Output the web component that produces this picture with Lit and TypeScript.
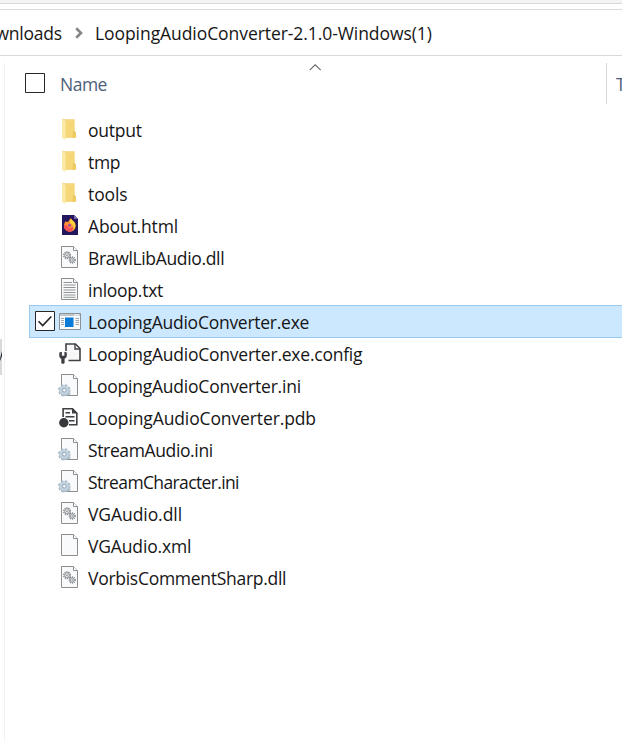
import { LitElement, html, svg, css, type TemplateResult } from "lit";
import { customElement, property } from "lit/decorators.js";

type Kind = "folder" | "firefox" | "dll" | "text" | "app" | "config" | "ini" | "pdb" | "blank";

interface Entry {
  name: string;
  kind: Kind;
  spacing: number;
  selected?: boolean;
}

const ENTRIES: Entry[] = [
  { name: "output", kind: "folder", spacing: -0.25 },
  { name: "tmp", kind: "folder", spacing: -0.3 },
  { name: "tools", kind: "folder", spacing: -0.1 },
  { name: "About.html", kind: "firefox", spacing: -0.15 },
  { name: "BrawlLibAudio.dll", kind: "dll", spacing: -0.34 },
  { name: "inloop.txt", kind: "text", spacing: -0.25 },
  { name: "LoopingAudioConverter.exe", kind: "app", spacing: -0.26, selected: true },
  { name: "LoopingAudioConverter.exe.config", kind: "config", spacing: -0.23 },
  { name: "LoopingAudioConverter.ini", kind: "ini", spacing: -0.22 },
  { name: "LoopingAudioConverter.pdb", kind: "pdb", spacing: -0.12 },
  { name: "StreamAudio.ini", kind: "ini", spacing: -0.37 },
  { name: "StreamCharacter.ini", kind: "ini", spacing: -0.63 },
  { name: "VGAudio.dll", kind: "dll", spacing: -0.07 },
  { name: "VGAudio.xml", kind: "blank", spacing: -0.15 },
  { name: "VorbisCommentSharp.dll", kind: "dll", spacing: -0.28 },
];

const page = svg`
  <path d="M3.5 .5H15.5L19.5 4.5V21.5H3.5Z" fill="#f9fafb" stroke="#8b8d8f"/>
  <path d="M15.5 .5V4.5H19.5" fill="#fff" stroke="#8b8d8f"/>`;

const ICONS: Record<Kind, TemplateResult> = {
  folder: svg`
    <path d="M4 1H16.5V13L17.8 14.5V20H4Z" fill="#f3dc93"/>
    <path d="M7.5 2.5H16.5V13L17.8 14.5V19.5H7.5Z" fill="#f6d778"/>
    <path d="M4 1.5L7.5 3V22L4 19.5Z" fill="#fce9a6"/>
    <path d="M15 13.5L16.5 13L17.8 14.5V19.5H14.5Z" fill="#edc85d"/>`,
  firefox: svg`
    <path d="M4 1H16L20 5V21H4Z" fill="#24165c"/>
    <path d="M16 1V5H20Z" fill="#7566ae"/>
    <path d="M7.2 7.3C8.4 8.3 9.5 7.8 10.4 7.8C10.8 6.3 12 5 13 4.3C13 6 16.6 7.2 17.2 9.2C18.7 13.8 16 17.7 12.1 17.7C8.2 17.7 5.3 14.4 6 10.8Z" fill="#ff912e"/>
    <path d="M6 10.8C7.2 12 9 11 10 12.8C11 15 15 14 15.4 11.2C16.5 15 13.8 17.7 11.8 17.7C8.3 17.7 5.5 14.8 6 10.8Z" fill="#f4505a"/>
    <path d="M13 4.3C13 6.7 17.5 7 17.4 12C17.2 13.6 16 15 14.7 15.7C16 12.5 14.5 10.5 12.5 9.3C11.5 8.6 12 6 13 4.3Z" fill="#ffd43b"/>
    <circle cx="11.5" cy="11.2" r="1.5" fill="#a04ba8"/>`,
  dll: svg`${page}
    <circle cx="9" cy="9.2" r="3.2" fill="#eef0f1" stroke="#818589" stroke-width="1.6" stroke-dasharray="1.2 .8"/>
    <circle cx="9" cy="9.2" r="2.3" fill="#e7eaec" stroke="#8c9195" stroke-width=".8"/>
    <circle cx="9" cy="9.2" r=".8" fill="#777b7e"/>
    <circle cx="14.2" cy="14" r="2.9" fill="#eef0f1" stroke="#818589" stroke-width="1.5" stroke-dasharray="1.1 .75"/>
    <circle cx="14.2" cy="14" r="2" fill="#e7eaec" stroke="#8c9195" stroke-width=".8"/>
    <circle cx="14.2" cy="14" r=".7" fill="#777b7e"/>`,
  text: svg`${page}
    <path d="M5.5 4.5H14M5.5 7H17.5M5.5 9.5H17.5M5.5 12H17.5M5.5 14.5H17.5M5.5 17H17.5M5.5 19.3H17.5" stroke="#909497" fill="none"/>`,
  app: svg`
    <path d="M1.5 3.5H22.5V19.5H1.5Z" fill="#f8f9fa" stroke="#8b9399"/>
    <path d="M2 4H22V6H2Z" fill="#c2c7cb"/>
    <path d="M16 5H21" stroke="#fff"/>
    <path d="M7 7.5H15.5V17H7Z" fill="#087bd8"/>
    <path d="M3 8.5H6M3 10.5H6M3 12.5H6M3 14.5H6M17.5 8.5H21M17.5 10.5H21M17.5 12.5H21M17.5 14.5H21" stroke="#9aa5ae" fill="none"/>`,
  config: svg`
    <path d="M8 9V2H17.5L22 6.5V18.5H10.5" fill="#f7f7f7" stroke="#414347" stroke-width="1.6"/>
    <path d="M17 2V7H22" fill="none" stroke="#414347" stroke-width="1.4"/>
    <path d="M1.3 10.5V14.2C1.3 15.4 2.4 16.4 3.3 16.7V20.8C3.3 22.2 6.6 22.2 6.6 20.8V16.7C8 16 8.8 15 8.8 13.8V10.5L6.4 9.8V13.7H3.9V9.8Z" fill="#3d3f43"/>`,
  ini: svg`${page}
    <circle cx="6.3" cy="16.3" r="5.2" fill="#c6d3dc" stroke="#abbdc9" stroke-width="2" stroke-dasharray="2.4 1.68"/>
    <circle cx="6.3" cy="16.3" r="4.3" fill="#c3d3de"/>
    <circle cx="6.3" cy="16.3" r="1.8" fill="#f9fafb" stroke="#8fa5b5"/>
    <circle cx="11" cy="19.8" r="1.4" fill="#aebfca"/>`,
  pdb: svg`
    <path d="M5.1 11V2.8H14.5L18.8 7V18.8H11" fill="#fafafa" stroke="#3d3f42" stroke-width="1.6"/>
    <path d="M14 2V7.5H19.5Z" fill="#3d3f42"/>
    <path d="M7.5 6.7H12M7.5 10.7H16.5M11 14.7H16.5" fill="none" stroke="#3d3f42" stroke-width="1.4"/>
    <circle cx="5.8" cy="16.8" r="4.7" fill="#36383c"/>`,
  blank: page,
};

@customElement("check-box")
class CheckBox extends LitElement {
  @property({ type: Boolean }) checked = false;

  static styles = css`
    :host { display: block; flex: none; width: 20px; height: 20px; }
    svg { display: block; }
  `;

  render() {
    return html`<svg width="20" height="20" viewBox="0 0 20 20" fill="none">
      <path d="M.5 .5H19.5V19.5H.5Z" fill="#fff" stroke="#25272a"/>
      ${this.checked ? svg`<path d="M3.5 10.2L7.7 14.5L16.3 5.5" stroke="#222" stroke-width="1.6"/>` : ""}
    </svg>`;
  }
}

@customElement("app-root")
class AppRoot extends LitElement {
  static styles = css`
    :host {
      display: flex;
      flex-direction: column;
      width: 622px;
      height: 741px;
      overflow: hidden;
      background: #fff;
      color: #161616;
      font: 17.5px/32px "Open Sans", "Noto Sans", sans-serif;
      white-space: nowrap;
    }
    * { box-sizing: border-box; }
    svg { display: block; flex: none; }
    .ribbon { flex: none; height: 4px; background: #f4f4f4; border-bottom: 1px solid #d8d8d8; }
    .address {
      flex: none;
      display: flex;
      align-items: center;
      height: 47px;
      margin-top: 5px;
      border: solid #d9d9d9;
      border-width: 1px 0;
    }
    .parent { width: 62px; flex: none; display: flex; justify-content: flex-end; letter-spacing: -0.2px; }
    .chevron { margin: 0 11px 0 12px; }
    .current { letter-spacing: -0.07px; }
    .body { flex: 1; display: flex; min-height: 0; }
    .nav { flex: none; width: 5px; border-right: 1px solid #f0f0f0; margin-top: 7px; padding-top: 276px; }
    .nav-item { width: 2px; height: 36px; background: #d9d9d9; overflow: hidden; }
    .main { flex: 1; min-width: 0; }
    .head { display: flex; height: 58px; color: #4c607a; }
    .head check-box { margin: 17px 15px 0 20px; }
    .name { width: 601px; flex: none; display: flex; }
    .label { margin-top: 12px; width: 225px; letter-spacing: -0.5px; }
    .sort { margin: 8px 0 0 23px; }
    .type { height: 41px; margin-top: 7px; padding: 5px 0 0 9px; border-left: 1px solid #d8d8d8; }
    .row {
      display: flex;
      align-items: center;
      height: 32px;
      margin-left: 24px;
      padding-left: 5px;
      border: 1px solid transparent;
      border-right: 0;
    }
    .row.selected { height: 33px; margin-top: -1px; background: #cce8ff; border-color: #99c9ed; }
    .slot { width: 23px; flex: none; }
    .selected .slot { padding-bottom: 1px; }
    .file { margin-left: 6px; }
  `;

  render() {
    return html`
      <div class="ribbon"></div>
      <div class="address">
        <span class="parent"><span>Downloads</span></span>
        <svg class="chevron" width="10" height="12" viewBox="0 0 10 12" fill="none">
          <path d="M2.2 1.3L7 6L2.2 10.7" stroke="#858585" stroke-width="2.6"/>
        </svg>
        <span class="current">LoopingAudioConverter-2.1.0-Windows(1)</span>
      </div>
      <div class="body">
        <div class="nav"><div class="nav-item">
          <svg width="2" height="36"><path d="M0 20L2 12V17L0 22Z" fill="#18202c"/></svg>
        </div></div>
        <div class="main">
          <div class="head">
            <div class="name">
              <check-box></check-box>
              <span class="label">Name</span>
              <svg class="sort" width="14" height="8" viewBox="0 0 14 8" fill="none">
                <path d="M1.7 6.2L7.2 .8L12.7 6.2" stroke="#666" stroke-width="1.1"/>
              </svg>
            </div>
            <div class="type">Type</div>
          </div>
          ${ENTRIES.map(
            (e) => html`<div class="row ${e.selected ? "selected" : ""}">
              <div class="slot">${e.selected ? html`<check-box checked></check-box>` : ""}</div>
              <svg width="24" height="24" viewBox="0 0 24 24">${ICONS[e.kind]}</svg>
              <span class="file" style="letter-spacing:${e.spacing}px">${e.name}</span>
            </div>`
          )}
        </div>
      </div>
    `;
  }
}
